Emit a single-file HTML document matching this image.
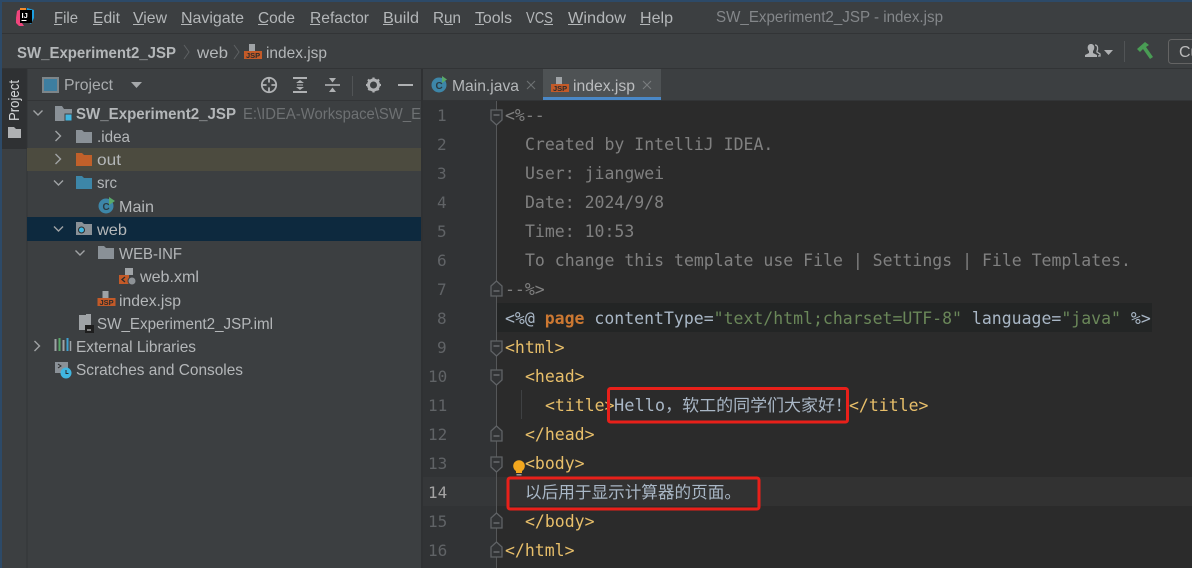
<!DOCTYPE html>
<html><head><meta charset="utf-8"><style>
html,body{margin:0;padding:0;background:#3c3f41;overflow:hidden}
svg{display:block;filter:blur(.35px)}
.u{font-family:"Liberation Sans","Noto Sans CJK SC",sans-serif;font-size:16px;fill:#b4b7b9}
.m{font-family:"DejaVu Sans Mono","Noto Sans CJK SC",monospace;font-size:16.5px;fill:#a9b7c6}
.c{fill:#808080}.t{fill:#e8bf6a}.g{fill:#6a8759}.k{fill:#cc7832;font-weight:bold}
.n{font-family:"DejaVu Sans Mono",monospace;font-size:16px;fill:#606366}
</style></head><body>
<svg width="1192" height="568" viewBox="0 0 1192 568" xmlns="http://www.w3.org/2000/svg">
<defs>
<g id="folder"><path d="M0 0h6l2 2h8v11H0z"/></g>
<g id="jsp"><path d="M5 0h6v7H5z" fill="#9fa3a6"/><path d="M0 7h18v8H0z" fill="#c35a28"/><text x="2" y="14" font-family="Liberation Sans" font-size="7.5" font-weight="bold" fill="#2b2b2b">JSP</text></g>
<g id="fs"><path d="M-5.500 -6h11v10l-5.500 5l-5.500-5z" fill="#313335" stroke="#606366" stroke-width="1.300"/><path d="M-3 -1h6" stroke="#707376" stroke-width="1.300"/></g>
<g id="fe"><path d="M-5.500 7h11v-10l-5.500-5l-5.500 5z" fill="#313335" stroke="#606366" stroke-width="1.300"/><path d="M-3 2h6" stroke="#707376" stroke-width="1.300"/></g>
<path id="chd" d="M-4.500 -2.500L0 2L4.500 -2.500" fill="none" stroke="#a0a3a5" stroke-width="1.400"/>
<path id="chr" d="M-2.500 -5L2.500 0L-2.500 5" fill="none" stroke="#a0a3a5" stroke-width="1.400"/>
</defs>

<rect width="1192" height="568" fill="#3c3f41"/>
<rect width="1192" height="2" fill="#2d4a68"/>
<rect width="2" height="568" fill="#2d4a68"/>
<path d="M2 33.500H1192" stroke="#323436" stroke-width="1"/>
<path d="M2 68.500H1192" stroke="#323436" stroke-width="1"/>

<!-- logo -->
<path d="M17 11l6-3 2 5-6 10-3-5z" fill="#f0457c"/><path d="M20 8h6v4h-6z" fill="#f58a2a"/><path d="M27 8l7 2v8l-3 6-5-3z" fill="#1d9fe0"/><path d="M16 18l6 5 2 3-5 0-3-3z" fill="#f0457c"/>
<rect x="20" y="10" width="12" height="13" fill="#000"/><text x="21.500" y="18" font-family="Liberation Sans" font-size="7.500" font-weight="bold" fill="#fff">IJ</text><path d="M21.500 20.500h5" stroke="#fff"/>

<!-- menu -->
<g class="u" font-size="15.500">
<text class="u" x="54" y="23" textLength="24" lengthAdjust="spacingAndGlyphs">File</text>
<text class="u" x="93" y="23" textLength="27" lengthAdjust="spacingAndGlyphs">Edit</text>
<text class="u" x="133" y="23" textLength="34" lengthAdjust="spacingAndGlyphs">View</text>
<text class="u" x="181" y="23" textLength="63" lengthAdjust="spacingAndGlyphs">Navigate</text>
<text class="u" x="258" y="23" textLength="37" lengthAdjust="spacingAndGlyphs">Code</text>
<text class="u" x="310" y="23" textLength="59" lengthAdjust="spacingAndGlyphs">Refactor</text>
<text class="u" x="383" y="23" textLength="36" lengthAdjust="spacingAndGlyphs">Build</text>
<text class="u" x="433" y="23" textLength="28" lengthAdjust="spacingAndGlyphs">Run</text>
<text class="u" x="475" y="23" textLength="37" lengthAdjust="spacingAndGlyphs">Tools</text>
<text class="u" x="526" y="23" textLength="27" lengthAdjust="spacingAndGlyphs">VCS</text>
<text class="u" x="568" y="23" textLength="58" lengthAdjust="spacingAndGlyphs">Window</text>
<text class="u" x="640" y="23" textLength="33" lengthAdjust="spacingAndGlyphs">Help</text>
</g>
<path d="M54 24.500h8M93 24.500h9M133 24.500h11M181 24.500h11M258 24.500h10M310 24.500h10M383 24.500h10M444 24.500h9M475 24.500h9M544 24.500h9M568 24.500h15M640 24.500h10" stroke="#b4b7b9" stroke-width="1"/>
<text class="u" x="716" y="22" style="fill:#84878a" textLength="227" lengthAdjust="spacingAndGlyphs">SW_Experiment2_JSP - index.jsp</text>

<!-- nav bar -->
<text class="u" x="17" y="58" font-weight="bold" textLength="159" lengthAdjust="spacingAndGlyphs">SW_Experiment2_JSP</text>
<path d="M184 45l5 7-5 7" fill="none" stroke="#5e6163"/>
<text class="u" x="197" y="58" textLength="31" lengthAdjust="spacingAndGlyphs">web</text>
<path d="M234 45l5 7-5 7" fill="none" stroke="#5e6163"/>
<use href="#jsp" x="244" y="44"/>
<text class="u" x="266" y="58" textLength="61" lengthAdjust="spacingAndGlyphs">index.jsp</text>

<!-- right toolbar -->
<path d="M1085 57v-2l4-2v-2c-2-2-2-7 2-7s4 5 2 7v2l4 2v2z" fill="#afb1b3"/><path d="M1095 45c3 0 3 4 2 6v1l3 2v2h-2" fill="none" stroke="#afb1b3" stroke-width="1.300"/>
<path d="M1104 50h9l-4.500 5z" fill="#afb1b3"/>
<path d="M1124.500 41v21" stroke="#515456"/>
<path d="M1137 49l8-7 4 3-3 2 7 10-3 2-7-10-3 3z" fill="#499c54"/>
<rect x="1168.500" y="39.500" width="40" height="24" rx="3" fill="none" stroke="#646464"/>
<text class="u" x="1179" y="57" style="fill:#bbb">Cu</text>

<!-- left strip -->
<rect x="2" y="69" width="25" height="499" fill="#3c3f41"/>
<rect x="2" y="69" width="25" height="80" fill="#2f3133"/>
<path d="M27 69V568" stroke="#323436"/>
<text class="u" transform="translate(19,121) rotate(-90)" style="fill:#d4d6d8;font-size:15px" textLength="41" lengthAdjust="spacingAndGlyphs">Project</text>
<path d="M8 127h6l2 2h5v9H8z" fill="#afb1b3"/>

<!-- project header -->
<rect x="43" y="78" width="15" height="14" fill="#3d7ea0" stroke="#7d8589" stroke-width="2"/>
<text class="u" x="64" y="90" textLength="49" lengthAdjust="spacingAndGlyphs" style="fill:#a9acae">Project</text>
<path d="M131 82h11l-5.500 6z" fill="#a5a8aa"/>
<circle cx="269" cy="85" r="7.200" fill="none" stroke="#afb1b3" stroke-width="1.800"/><path d="M269 78v14M262 85h14" stroke="#afb1b3" stroke-width="1.800"/><circle cx="269" cy="85" r="2.500" fill="#3c3f41"/>
<path d="M293 78h14M293 92h14" stroke="#afb1b3" stroke-width="2"/><path d="M296 83l4-3 4 3zM296 87l4 3 4-3z" fill="#afb1b3"/><path d="M297 85h6" stroke="#afb1b3"/>
<path d="M325 85h15" stroke="#afb1b3" stroke-width="1.600"/><path d="M329 78l3.500 4.500 3.500-4.500zM329 92l3.500-4.500 3.500 4.500z" fill="#afb1b3"/>
<path d="M352.500 76v20" stroke="#515456"/>
<circle cx="373.500" cy="85" r="5" fill="none" stroke="#afb1b3" stroke-width="3"/>
<path d="M373.500 77.500v15M366 85h15M368 79.500l11 11M379 79.500l-11 11" stroke="#afb1b3" stroke-width="2.200" stroke-dasharray="2.500 10"/>
<path d="M398 85h15" stroke="#afb1b3" stroke-width="2"/>
<path d="M27 100.500H421" stroke="#333537"/>

<!-- tree -->
<rect x="27" y="148" width="394" height="23" fill="#4c4b3f"/>
<rect x="27" y="217" width="394" height="24" fill="#0d293e"/>

<use href="#chd" x="38" y="113"/>
<path d="M55 106h7l2 3h8v12H55z" fill="#8a9197"/><rect x="65" y="114" width="7" height="7" fill="#40b6e0" stroke="#3c3f41"/>
<text class="u" x="76" y="119" font-weight="bold" textLength="160" lengthAdjust="spacingAndGlyphs">SW_Experiment2_JSP</text>
<text class="u" x="243" y="119" style="fill:#6e7173" textLength="178" lengthAdjust="spacingAndGlyphs">E:\IDEA-Workspace\SW_E</text>

<use href="#chr" x="58" y="136"/><use href="#folder" x="76" y="130" fill="#8a9197"/>
<text class="u" x="97" y="142" textLength="33" lengthAdjust="spacingAndGlyphs">.idea</text>
<use href="#chr" x="58" y="159"/><use href="#folder" x="76" y="153" fill="#c0602a"/>
<text class="u" x="97" y="165" textLength="24" lengthAdjust="spacingAndGlyphs">out</text>
<use href="#chd" x="58.500" y="183"/><use href="#folder" x="76" y="176" fill="#3d86a8"/>
<text class="u" x="97" y="188" textLength="20" lengthAdjust="spacingAndGlyphs">src</text>
<circle cx="106" cy="206" r="7.500" fill="#3d86a8"/><text x="102.500" y="210" font-family="Liberation Sans" font-size="10" font-weight="bold" fill="#2b3a40">C</text><path d="M109 197l6 4-6 4z" fill="#59a869"/>
<text class="u" x="119" y="212" textLength="35" lengthAdjust="spacingAndGlyphs">Main</text>
<use href="#chd" x="58.500" y="229"/><use href="#folder" x="76" y="222" fill="#8a9197"/><circle cx="81.500" cy="230" r="3" fill="#40b6e0" stroke="#2b2b2b"/>
<text class="u" x="97" y="235" textLength="30" lengthAdjust="spacingAndGlyphs">web</text>
<use href="#chd" x="80" y="253"/><use href="#folder" x="98" y="246" fill="#8a9197"/>
<text class="u" x="119" y="259" textLength="63" lengthAdjust="spacingAndGlyphs">WEB-INF</text>
<path d="M125 268h8v7h-8z" fill="#9fa3a6"/><path d="M119 275h10v9h-10z" fill="#c35a28"/><path d="M125 277l-3 2.500 3 2.500" fill="none" stroke="#2b2b2b" stroke-width="1.300"/><circle cx="132" cy="281" r="4" fill="#8d9296" stroke="#3c3f41"/>
<text class="u" x="140" y="282" textLength="59" lengthAdjust="spacingAndGlyphs">web.xml</text>
<use href="#jsp" x="97.500" y="291"/>
<text class="u" x="119" y="306" textLength="62" lengthAdjust="spacingAndGlyphs">index.jsp</text>
<path d="M79 315h7v-1h5v16H79z" fill="#9fa3a6"/><rect x="85" y="325" width="9" height="8" fill="#1e1e1e"/><path d="M87 330h4" stroke="#ddd"/>
<text class="u" x="97" y="329" textLength="176" lengthAdjust="spacingAndGlyphs">SW_Experiment2_JSP.iml</text>
<use href="#chr" x="37" y="346"/>
<path d="M55.500 339v12" stroke="#9fa3a6" stroke-width="2"/><path d="M59.500 338v13" stroke="#59a869" stroke-width="2"/><path d="M63.500 340v11" stroke="#9fa3a6" stroke-width="2"/><path d="M67.500 338v13" stroke="#40a0d0" stroke-width="2"/><path d="M70.500 341v10" stroke="#9fa3a6" stroke-width="1.500"/>
<text class="u" x="76" y="352" textLength="120" lengthAdjust="spacingAndGlyphs">External Libraries</text>
<rect x="55" y="362" width="13" height="11" fill="#8a9197"/><path d="M58 364l3 2-3 2" fill="none" stroke="#2b2b2b"/><circle cx="66" cy="373" r="5.500" fill="#40b6e0"/><path d="M66 370v3.500h2.500" fill="none" stroke="#2b2b2b"/>
<text class="u" x="76" y="375" textLength="167" lengthAdjust="spacingAndGlyphs">Scratches and Consoles</text>

<!-- splitter -->
<rect x="421" y="69" width="2" height="499" fill="#2f3133"/>

<!-- tabs -->
<rect x="423" y="69" width="769" height="31" fill="#3c3f41"/>
<rect x="543" y="69" width="118" height="28" fill="#4e5254"/>
<rect x="543" y="97" width="118" height="3.500" fill="#4a88c7"/>
<path d="M423 100.500H1192" stroke="#323436"/>
<circle cx="439" cy="85" r="7.500" fill="#3d86a8"/><text x="435.500" y="89" font-family="Liberation Sans" font-size="10" font-weight="bold" fill="#2b3a40">C</text><path d="M442 76l5 3.500-5 3.500z" fill="#59a869"/>
<text class="u" x="452" y="91" textLength="67" lengthAdjust="spacingAndGlyphs">Main.java</text>
<path d="M527 81l8 8M535 81l-8 8" stroke="#6e7173" stroke-width="1.100"/>
<use href="#jsp" x="551" y="77"/>
<text class="u" x="573" y="91" textLength="62" lengthAdjust="spacingAndGlyphs" style="fill:#bbbdbf">index.jsp</text>
<path d="M643 81l8 8M651 81l-8 8" stroke="#7a7d7f" stroke-width="1.100"/>

<!-- editor -->
<rect x="423" y="101" width="769" height="467" fill="#2b2b2b"/>
<rect x="423" y="101" width="74" height="467" fill="#313335"/>
<rect x="423" y="477" width="74" height="29" fill="#353739"/>
<rect x="497" y="477" width="695" height="29" fill="#323232"/>
<rect x="497" y="303" width="655" height="29" fill="#232525"/>
<path d="M496.500 101V568" stroke="#555759" stroke-width="1"/>
<path d="M521.500 390v29M521.500 419" stroke="#3f4143"/>

<g class="n">
<text class="n" x="437" y="121">1</text>
<text class="n" x="437" y="150">2</text>
<text class="n" x="437" y="179">3</text>
<text class="n" x="437" y="208">4</text>
<text class="n" x="437" y="237">5</text>
<text class="n" x="437" y="266">6</text>
<text class="n" x="437" y="295">7</text>
<text class="n" x="437" y="324">8</text>
<text class="n" x="437" y="353">9</text>
<text class="n" x="428" y="382">10</text>
<text class="n" x="428" y="411">11</text>
<text class="n" x="428" y="440">12</text>
<text class="n" x="428" y="469">13</text>
<text class="n" x="428" y="498" style="fill:#a4a3a3">14</text>
<text class="n" x="428" y="527">15</text>
<text class="n" x="428" y="556">16</text>
</g>

<use href="#fs" x="496.500" y="116"/>
<use href="#fe" x="496.500" y="289"/>
<use href="#fs" x="496.500" y="347"/>
<use href="#fs" x="496.500" y="376"/>
<use href="#fe" x="496.500" y="434"/>
<use href="#fs" x="496.500" y="463"/>
<use href="#fe" x="496.500" y="521"/>
<use href="#fe" x="496.500" y="550"/>

<text class="m c" x="505" y="121">&lt;%--</text>
<text class="m c" x="525" y="150">Created by IntelliJ IDEA.</text>
<text class="m c" x="525" y="179">User: jiangwei</text>
<text class="m c" x="525" y="208">Date: 2024/9/8</text>
<text class="m c" x="525" y="237">Time: 10:53</text>
<text class="m c" x="525" y="266">To change this template use File | Settings | File Templates.</text>
<text class="m c" x="505" y="295">--%&gt;</text>
<text class="m" x="505" y="324" xml:space="preserve">&lt;%@ <tspan class="k">page</tspan> contentType=<tspan class="g">"text/html;charset=UTF-8"</tspan> language=<tspan class="g">"java"</tspan> %&gt;</text>
<text class="m t" x="505" y="353">&lt;html&gt;</text>
<text class="m t" x="525" y="382">&lt;head&gt;</text>
<text class="m t" x="545" y="411">&lt;title&gt;</text>
<text class="m" x="614" y="411" textLength="238" lengthAdjust="spacingAndGlyphs">Hello，软工的同学们大家好！</text>
<text class="m t" x="849" y="411">&lt;/title&gt;</text>
<text class="m t" x="525" y="440">&lt;/head&gt;</text>
<text class="m t" x="525" y="469">&lt;body&gt;</text>
<text class="m" x="525" y="498" textLength="216" lengthAdjust="spacingAndGlyphs">以后用于显示计算器的页面。</text>
<text class="m t" x="525" y="527">&lt;/body&gt;</text>
<text class="m t" x="505" y="556">&lt;/html&gt;</text>

<!-- bulb -->
<circle cx="519" cy="466" r="5.800" fill="#f2a71e"/><rect x="516" y="471" width="6" height="2" fill="#f2a71e"/><rect x="516.500" y="474" width="5" height="1.500" fill="#9a9a9a"/>

<!-- red boxes -->
<rect x="608.500" y="388.500" width="239" height="33.500" rx="2" fill="none" stroke="#e8201a" stroke-width="3"/>
<rect x="508" y="478" width="251" height="31" rx="2" fill="none" stroke="#e8201a" stroke-width="3"/>
</svg>
</body></html>
